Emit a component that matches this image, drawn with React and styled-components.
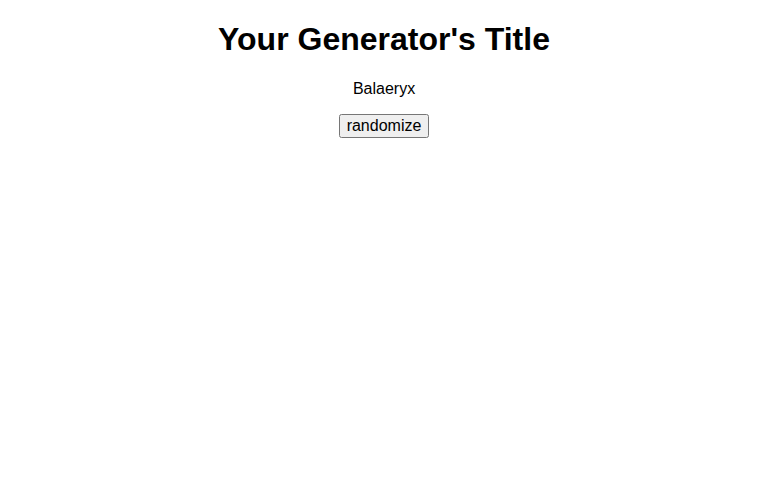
import React, { useState } from "react";
import { styled, createGlobalStyle } from "styled-components";

const names = ["Balaeryx", "Thornwick", "Maelis", "Corvane", "Ysolde"];

function App() {
  const [name, setName] = useState(names[0]);

  const randomize = () => {
    setName(names[Math.floor(Math.random() * names.length)]);
  };

  return (
    <>
      <GlobalStyle />
      <Page>
        <Title>Your Generator's Title</Title>
        <Result>{name}</Result>
        <Controls>
          <RandomButton onClick={randomize}>randomize</RandomButton>
        </Controls>
      </Page>
    </>
  );
}

const GlobalStyle = createGlobalStyle`
  body {
    margin: 0;
    background: #fff;
    font-family: "Liberation Sans", Arial, sans-serif;
    color: #000;
  }
`;

const Page = styled.main`
  text-align: center;
`;

const Title = styled.h1`
  font-size: 32px;
  font-weight: bold;
  margin: 21.44px 0;
`;

const Result = styled.p`
  font-size: 16px;
  margin: 16px 0;
`;

const Controls = styled.div`
  margin: 0;
`;

const RandomButton = styled.button`
  font-family: "Liberation Sans", Arial, sans-serif;
  font-size: 16px;
`;

export default App;
